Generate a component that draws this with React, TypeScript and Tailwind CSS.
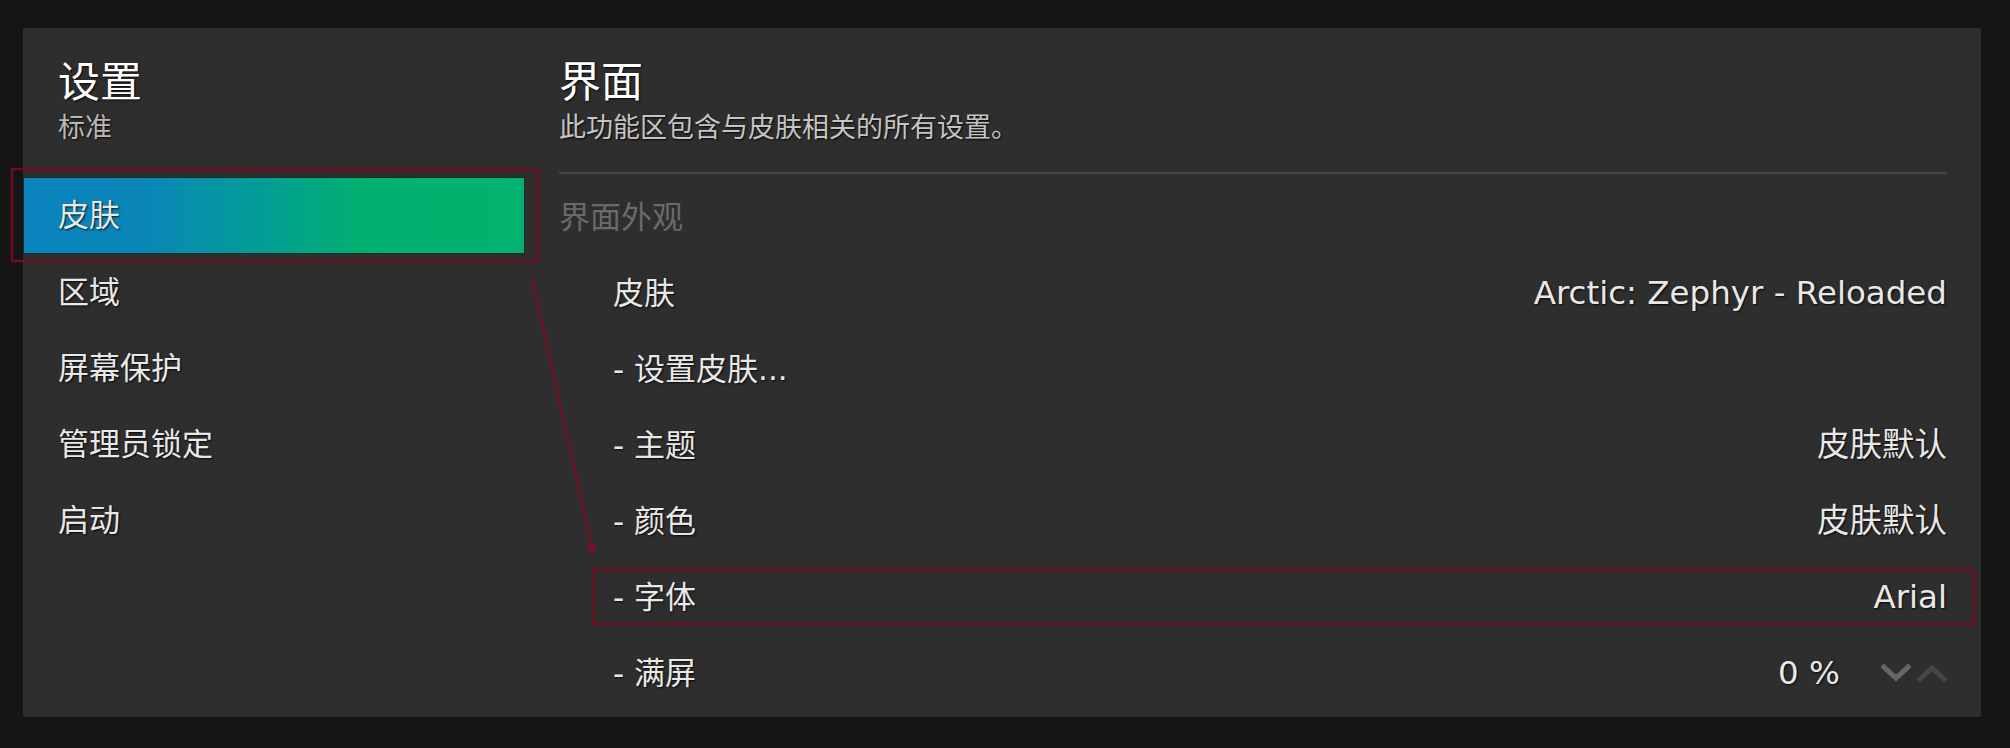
const navItems = ["皮肤", "区域", "屏幕保护", "管理员锁定", "启动"];

const rows: { label: string; value?: string; spinner?: boolean }[] = [
  { label: "皮肤", value: "Arctic: Zephyr - Reloaded" },
  { label: "- 设置皮肤..." },
  { label: "- 主题", value: "皮肤默认" },
  { label: "- 颜色", value: "皮肤默认" },
  { label: "- 字体", value: "Arial" },
  { label: "- 满屏", value: "0 %", spinner: true },
];

const shadow = "[text-shadow:1px_1px_2px_rgba(0,0,0,0.85)]";

const Chevron = ({ up, className }: { up?: boolean; className: string }) => (
  <svg viewBox="0 0 30 18" className={className} fill="none">
    <path
      d={up ? "M3 15 L15 4 L27 15" : "M3 3 L15 14 L27 3"}
      stroke="currentColor"
      strokeWidth="5"
      strokeLinecap="square"
    />
  </svg>
);

const App = () => {
  return (
    <div className="relative h-[748px] w-[2010px] overflow-hidden bg-[#151516] pt-[28px] pl-[23px] font-['DejaVu_Sans','Noto_Sans_CJK_SC',sans-serif] text-[#e8e8e8]">
      <div className="flex h-[689px] w-[1958px] rounded-[2px] bg-[#2e2e2e]">
        {/* sidebar */}
        <div className="flex w-[502px] flex-col">
          <div className="flex flex-col pt-[34px] pl-[35px]">
            <div className={`h-[42px] text-[42px] leading-[42px] text-white ${shadow}`}>设置</div>
            <div className={`mt-[10px] h-[27px] text-[27px] leading-[27px] text-[#b8b8b8] ${shadow}`}>标准</div>
          </div>
          <div className="mt-[36px] flex flex-col">
            {navItems.map((item, i) => (
              <div
                key={item}
                className={
                  i === 0
                    ? "flex h-[77px] items-center border border-[#1f2a2a] bg-[linear-gradient(90deg,#0a84bd_0%,#0a86b8_24%,#029c98_46%,#01b06f_68%,#01b36e_100%)] pl-[34px]"
                    : "flex h-[76px] items-center pl-[35px]"
                }
              >
                <span className={`text-[31px] ${shadow}`}>{item}</span>
              </div>
            ))}
          </div>
        </div>

        {/* content */}
        <div className="ml-[34px] mr-[34px] flex flex-1 flex-col pt-[34px]">
          <div className={`h-[42px] text-[42px] leading-[42px] text-white ${shadow}`}>界面</div>
          <div className={`mt-[10px] h-[27px] text-[27px] leading-[27px] text-[#c4c4c4] ${shadow}`}>
            此功能区包含与皮肤相关的所有设置。
          </div>
          <div className="mt-[31px] h-[2px] bg-[#474747]" />
          <div className="mt-[5px] flex h-[76px] items-center text-[31px] text-[#6a6a6a]">界面外观</div>
          {rows.map((row) => (
            <div key={row.label} className="flex h-[76px] items-center justify-between pl-[54px] text-[31px]">
              <span className={shadow}>{row.label}</span>
              {row.value && (
                <div className="flex items-center">
                  <span className={`text-[32.5px] ${shadow}`}>{row.value}</span>
                  {row.spinner && (
                    <div className="ml-[41px] flex items-center gap-[6px]">
                      <Chevron className="h-[18px] w-[30px] text-[#666666]" />
                      <Chevron up className="h-[18px] w-[30px] text-[#464646]" />
                    </div>
                  )}
                </div>
              )}
            </div>
          ))}
        </div>
      </div>

      {/* annotation overlay */}
      <svg className="pointer-events-none absolute inset-0" width="2010" height="748" viewBox="0 0 2010 748">
        <rect x="12" y="169" width="526" height="92" fill="none" stroke="#6d0e1e" strokeWidth="2.5" />
        <rect x="593" y="570" width="1381" height="54" fill="none" stroke="#6d0e1e" strokeWidth="2.5" />
        <line x1="532" y1="279" x2="592" y2="548" stroke="#7a0f22" strokeWidth="2" />
        <path d="M587 545 L593 556 L596 543 Z" fill="#7a0f22" />
      </svg>
    </div>
  );
};

export default App;
